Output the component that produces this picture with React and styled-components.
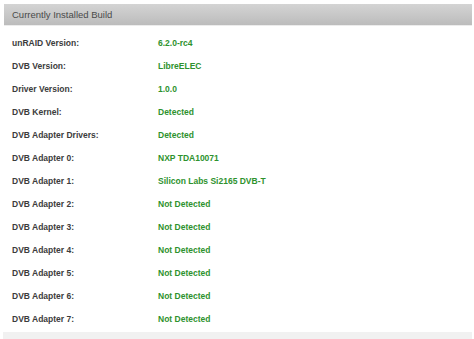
import styled, { createGlobalStyle } from "styled-components";

const GlobalStyle = createGlobalStyle`
  html, body {
    margin: 0;
    padding: 0;
    background: #ffffff;
  }
  body {
    font-family: "Liberation Sans", Arial, sans-serif;
  }
`;

const rows = [
  ["unRAID Version:", "6.2.0-rc4"],
  ["DVB Version:", "LibreELEC"],
  ["Driver Version:", "1.0.0"],
  ["DVB Kernel:", "Detected"],
  ["DVB Adapter Drivers:", "Detected"],
  ["DVB Adapter 0:", "NXP TDA10071"],
  ["DVB Adapter 1:", "Silicon Labs Si2165 DVB-T"],
  ["DVB Adapter 2:", "Not Detected"],
  ["DVB Adapter 3:", "Not Detected"],
  ["DVB Adapter 4:", "Not Detected"],
  ["DVB Adapter 5:", "Not Detected"],
  ["DVB Adapter 6:", "Not Detected"],
  ["DVB Adapter 7:", "Not Detected"],
];

const App = () => (
  <>
    <GlobalStyle />
    <Page>
      <Header>Currently Installed Build</Header>
      <Table>
        {rows.map(([label, value]) => (
          <Row key={label}>
            <Label>{label}</Label>
            <Value>{value}</Value>
          </Row>
        ))}
      </Table>
      <Footer />
    </Page>
  </>
);

export default App;

const Page = styled.div`
  padding: 4px 2px 0 4px;
  display: flex;
  flex-direction: column;
`;

const Header = styled.div`
  height: 21px;
  display: flex;
  align-items: center;
  padding-left: 8px;
  background: linear-gradient(to bottom, #d4d4d4, #bcbcbc);
  border-bottom: 1px solid #ececec;
  color: #4a4a4a;
  font-size: 9.5px;
`;

const Table = styled.div`
  display: flex;
  flex-direction: column;
  padding: 5px 0 2px 8px;
`;

const Row = styled.div`
  height: 23px;
  display: grid;
  grid-template-columns: 146px 1fr;
  align-items: center;
  font-size: 8.5px;
  font-weight: bold;
`;

const Label = styled.span`
  color: #3c3c3c;
`;

const Value = styled.span`
  color: #2e922e;
`;

const Footer = styled.div`
  height: 8px;
  margin-left: -1px;
  background: #f1f1f1;
`;
